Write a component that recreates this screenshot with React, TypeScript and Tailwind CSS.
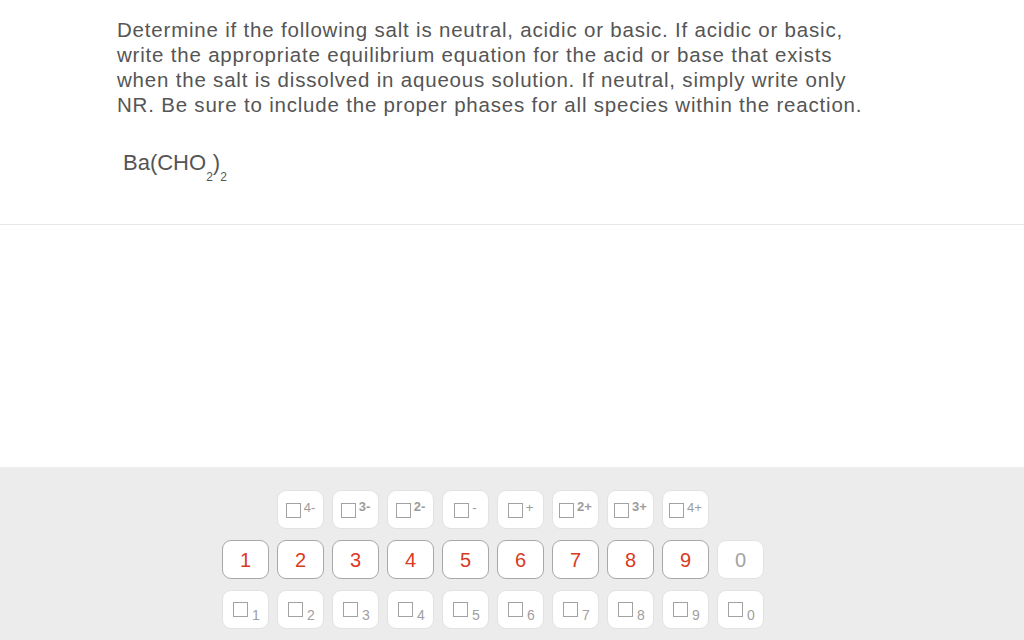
const sup = ['4-', '3-', '2-', '-', '+', '2+', '3+', '4+'];
const digits = ['1', '2', '3', '4', '5', '6', '7', '8', '9', '0'];

function Box() {
  return <span className="inline-block w-[15px] h-[15px] border-[1.5px] border-[#a2a2a2]" />;
}

function SupKey({ label, first }: { label: string; first?: boolean }) {
  const bold = /^[23]/.test(label);
  return (
    <button
      className={`h-[39px] rounded-[9px] bg-white border border-[#e2e2e2] flex items-center justify-center ${first ? 'col-start-2' : ''}`}
    >
      <span className="flex items-start gap-[3px] pt-[2px]">
        <Box />
        <span className={`leading-none text-[#9c9c9c] ${bold ? 'font-bold text-[13px] -mt-[3px]' : 'text-[13px] -mt-[2px]'}`}>
          {label}
        </span>
      </span>
    </button>
  );
}

function DigitKey({ d }: { d: string }) {
  const zero = d === '0';
  return (
    <button
      className={`h-[39px] rounded-[9px] bg-white flex items-center justify-center text-[20px] ${
        zero ? 'border border-[#e2e2e2] text-[#a3a3a3]' : 'border border-[#a8a8a8] text-[#d93a22]'
      }`}
    >
      {d}
    </button>
  );
}

function SubKey({ d }: { d: string }) {
  return (
    <button className="h-[39px] rounded-[9px] bg-white border border-[#e2e2e2] flex items-center justify-center">
      <span className="flex items-end gap-[4px] pl-[2px]">
        <Box />
        <span className="text-[14px] leading-none text-[#a0a0a0] -mb-[5px]">{d}</span>
      </span>
    </button>
  );
}

export default function App() {
  return (
    <div className="h-[640px] flex flex-col bg-white text-[#555]" style={{ fontFamily: '"Liberation Sans", Arial, sans-serif' }}>
      <div className="h-[225px] border-b border-[#e8e8e8] pl-[117px] pt-[17px]">
        <p className="text-[20.5px] leading-[25px] tracking-[0.8px] whitespace-nowrap">
          Determine if the following salt is neutral, acidic or basic. If acidic or basic,
          <br />
          write the appropriate equilibrium equation for the acid or base that exists
          <br />
          when the salt is dissolved in aqueous solution. If neutral, simply write only
          <br />
          NR. Be sure to include the proper phases for all species within the reaction.
        </p>
        <div className="mt-[31px] pl-[6px] text-[22px] leading-[30px]">
          Ba(CHO<span className="text-[12px] align-[-11px]">2</span>)<span className="text-[12px] align-[-11px]">2</span>
        </div>
      </div>
      <div className="flex-1" />
      <div className="h-[173px] bg-[#ececec] pt-[23px]">
        <div className="ml-[222px] w-[542px] grid grid-cols-10 gap-x-[8px] gap-y-[11px]">
          {sup.map((s, i) => (
            <SupKey key={s} label={s} first={i === 0} />
          ))}
          <div className="col-span-1" />
          {digits.map(d => (
            <DigitKey key={d} d={d} />
          ))}
          {digits.map(d => (
            <SubKey key={d} d={d} />
          ))}
        </div>
      </div>
    </div>
  );
}
